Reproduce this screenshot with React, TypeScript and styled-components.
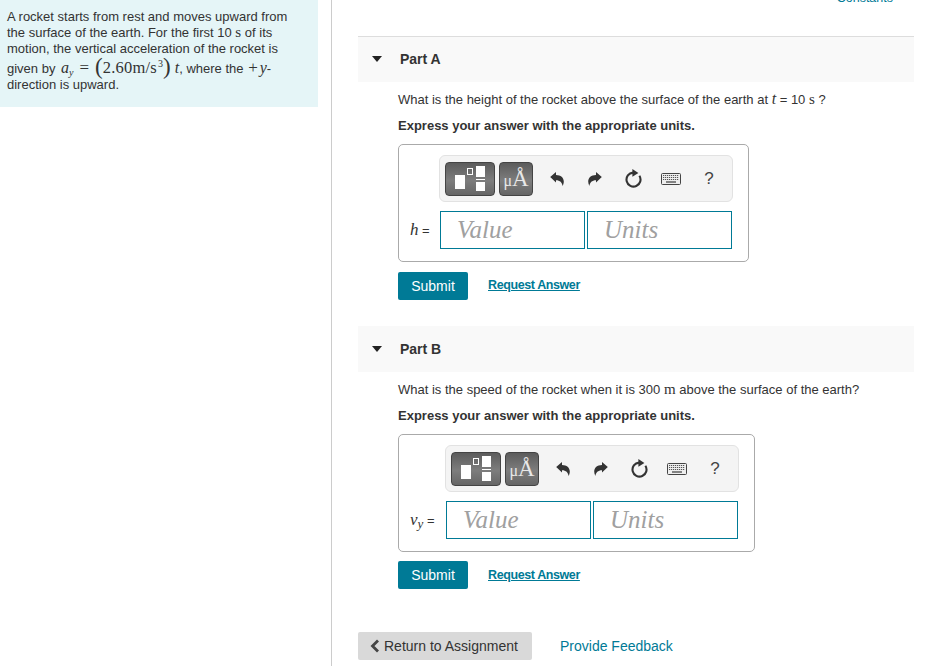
import React from "react";
import styled, { createGlobalStyle } from "styled-components";

const GlobalStyle = createGlobalStyle`
  html, body {
    margin: 0;
    padding: 0;
    background: #ffffff;
    height: 666px;
    overflow: hidden;
  }
  * {
    box-sizing: border-box;
  }
  body {
    font-family: "Liberation Sans", Arial, sans-serif;
    font-size: 13px;
    color: #333333;
  }
`;

const UndoIcon = () => (
  <svg width="14" height="14" viewBox="0 0 14 14">
    <path d="M0.2 5 L6 0 V3 C10.8 3 13.8 5.8 13.8 9.6 C13.8 11.2 13.3 12.7 12.6 14 C12.2 10.6 10 8.2 6 8.2 V10.4 Z" fill="#333333" />
  </svg>
);

const RedoIcon = () => (
  <svg width="14" height="14" viewBox="0 0 14 14">
    <path d="M13.8 5 L8 0 V3 C3.2 3 0.2 5.8 0.2 9.6 C0.2 11.2 0.7 12.7 1.4 14 C1.8 10.6 4 8.2 8 8.2 V10.4 Z" fill="#333333" />
  </svg>
);

const ResetIcon = () => (
  <svg width="17" height="19" viewBox="0 0 17 19">
    <path d="M8 3.6 A7 7 0 1 0 14.4 6.8" fill="none" stroke="#333333" strokeWidth="2.1" />
    <path d="M7.4 0 L13.4 4 L7.4 7.8 Z" fill="#333333" />
  </svg>
);

const KeyboardIcon = () => (
  <svg width="20" height="12" viewBox="0 0 20 12">
    <rect x="0.5" y="0.5" width="19" height="11" rx="1" fill="#eeeeee" stroke="#444444" />
    <path d="M2 2.5 H18 M2 4.5 H18 M2 6.5 H18" stroke="#555555" strokeDasharray="1.2 0.8" />
    <path d="M5 9 H15" stroke="#555555" strokeWidth="1.4" />
  </svg>
);

const TemplateIcon = () => (
  <svg width="30" height="25" viewBox="0 0 30 25">
    <rect x="0" y="9" width="10" height="14" fill="#ffffff" />
    <rect x="12.5" y="2.5" width="5" height="6" fill="none" stroke="#ffffff" />
    <rect x="21" y="0" width="9" height="11" fill="#ffffff" />
    <rect x="21" y="13" width="9" height="1" fill="#ffffff" />
    <rect x="21" y="16" width="9" height="9" fill="#ffffff" />
  </svg>
);

const Part = ({
  name,
  question,
  label,
  labelWidth,
  first,
}: {
  name: string;
  question: React.ReactNode;
  label: React.ReactNode;
  labelWidth: number;
  first?: boolean;
}) => (
  <section>
    <PartHeader $first={first}>
      <Caret />
      <PartTitle>{name}</PartTitle>
    </PartHeader>
    <PartBody>
      <Question>{question}</Question>
      <Instruction>Express your answer with the appropriate units.</Instruction>
      <AnswerBox $labelWidth={labelWidth}>
        <Toolbar>
          <DarkButton $width={50}>
            <TemplateIcon />
          </DarkButton>
          <DarkButton $width={34}>
            <UnitGlyph>
              <small>μ</small>Å
            </UnitGlyph>
          </DarkButton>
          <IconSlot $left={3}>
            <UndoIcon />
          </IconSlot>
          <IconSlot>
            <RedoIcon />
          </IconSlot>
          <IconSlot>
            <ResetIcon />
          </IconSlot>
          <IconSlot>
            <KeyboardIcon />
          </IconSlot>
          <IconSlot>
            <Help>?</Help>
          </IconSlot>
        </Toolbar>
        <FieldLabel>{label}</FieldLabel>
        <Fields>
          <Field placeholder="Value" readOnly />
          <Field placeholder="Units" readOnly />
        </Fields>
      </AnswerBox>
      <Actions $first={first}>
        <Submit>Submit</Submit>
        <RequestLink href="#" $first={first}>
          Request Answer
        </RequestLink>
      </Actions>
    </PartBody>
  </section>
);

const App = () => {
  return (
    <Page>
      <GlobalStyle />
      <Intro>
        <div>A rocket starts from rest and moves upward from</div>
        <div>
          the surface of the earth. For the first 10 <TexRoman>s</TexRoman> of its
        </div>
        <div>motion, the vertical acceleration of the rocket is</div>
        <GivenLine>
          given by{" "}
          <IntroVar $left={2}>
            a<sub>y</sub>
          </IntroVar>
          <TexOp $side={6}>=</TexOp>
          <TexParen>(</TexParen>
          <TexNum>
            2.60m/s<sup>3</sup>
          </TexNum>
          <TexParen>)</TexParen>
          <IntroVar $left={4}>t</IntroVar>, where the <TexOp $side={1}>+</TexOp>
          <IntroVar $left={1}>y</IntroVar>-
        </GivenLine>
        <div>direction is upward.</div>
      </Intro>
      <Main>
        <TopLinks>
          <ConstantsLink href="#">Constants</ConstantsLink>
        </TopLinks>
        <Part
          first
          name="Part A"
          labelWidth={21}
          label={
            <>
              <TexVar>h</TexVar> =
            </>
          }
          question={
            <>
              What is the height of the rocket above the surface of the earth at <TexVar>t</TexVar> = 10{" "}
              <TexRoman>s</TexRoman> ?
            </>
          }
        />
        <Part
          name="Part B"
          labelWidth={27}
          label={
            <>
              <TexVar>
                v<sub>y</sub>
              </TexVar>{" "}
              =
            </>
          }
          question={
            <>
              What is the speed of the rocket when it is 300 <TexRoman>m</TexRoman> above the surface of the earth?
            </>
          }
        />
        <Footer>
          <ReturnButton>
            <svg width="10" height="14" viewBox="0 0 10 14">
              <path d="M8 1.5 L2.5 7 L8 12.5" fill="none" stroke="#444444" strokeWidth="2.8" />
            </svg>
            Return to Assignment
          </ReturnButton>
          <FeedbackLink href="#">Provide Feedback</FeedbackLink>
        </Footer>
      </Main>
    </Page>
  );
};

export default App;

const Page = styled.div`
  display: flex;
  align-items: flex-start;
  width: 929px;
  height: 666px;
  overflow: hidden;
`;

const Intro = styled.div`
  width: 318px;
  height: 107px;
  flex-shrink: 0;
  padding: 9px 7px 0;
  background-color: #e5f5f7;
  font-size: 13px;
  line-height: 16px;
  color: #333333;
  white-space: nowrap;
`;

const GivenLine = styled.div`
  height: 20px;
  line-height: 22px;
`;

const TexNum = styled.span`
  font-family: "Liberation Serif", serif;
  font-size: 16.5px;
  letter-spacing: 0.2px;
  sup {
    font-size: 10px;
    line-height: 0;
    margin-left: 1px;
  }
`;

const TexOp = styled.span<{ $side: number }>`
  margin: 0 ${(p) => p.$side}px;
  font-family: "Liberation Serif", serif;
  font-size: 17px;
`;

const TexParen = styled.span`
  font-family: "Liberation Serif", serif;
  font-size: 23px;
  line-height: 0;
  font-weight: 300;
  vertical-align: -1px;
`;

const TexVar = styled.i`
  font-family: "Liberation Serif", serif;
  font-size: 16px;
  line-height: 0;
  sub {
    font-size: 10px;
    line-height: 0;
    vertical-align: -3px;
  }
`;

const IntroVar = styled(TexVar)<{ $left: number }>`
  margin-left: ${(p) => p.$left}px;
`;

const TexRoman = styled.span`
  font-family: "Liberation Serif", serif;
  font-size: 15px;
  line-height: 0;
`;

const Main = styled.main`
  width: 598px;
  height: 666px;
  margin-left: 13px;
  padding: 0 15px 0 26px;
  border-left: 1px solid #cccccc;
`;

const TopLinks = styled.div`
  display: flex;
  justify-content: flex-end;
  height: 36px;
  padding-right: 21px;
  overflow: hidden;
`;

const ConstantsLink = styled.a`
  margin-top: -10px;
  height: 16px;
  font-size: 12.5px;
  line-height: 16px;
  color: #007a96;
  text-decoration: none;
`;

const PartHeader = styled.div<{ $first?: boolean }>`
  display: flex;
  align-items: center;
  height: 46px;
  padding-left: 14px;
  background-color: #f9f9f9;
  box-shadow: ${(p) => (p.$first ? "inset 0 1px #dddddd" : "none")};
`;

const Caret = styled.span`
  width: 0;
  height: 0;
  border-left: 5.5px solid transparent;
  border-right: 5.5px solid transparent;
  border-top: 6px solid #222222;
`;

const PartTitle = styled.h3`
  margin: 0 0 0 18px;
  font-size: 14px;
  font-weight: bold;
  color: #333333;
`;

const PartBody = styled.div`
  padding-left: 40px;
`;

const Question = styled.p`
  margin: 0;
  height: 32px;
  padding-top: 9px;
  line-height: 18px;
  font-size: 13px;
  color: #333333;
`;

const Instruction = styled.p`
  margin: 0;
  height: 30px;
  padding-top: 3px;
  line-height: 18px;
  font-size: 13px;
  font-weight: bold;
`;

const AnswerBox = styled.div<{ $labelWidth: number }>`
  display: inline-grid;
  grid-template-columns: ${(p) => p.$labelWidth}px 294px;
  column-gap: 8px;
  row-gap: 9px;
  align-items: center;
  padding: 10px 15px 12px 11px;
  border: 1px solid #aaaaaa;
  border-radius: 5px;
  vertical-align: top;
`;

const Toolbar = styled.div`
  grid-column: 2;
  display: flex;
  align-items: center;
  gap: 4px;
  height: 47px;
  padding: 0 5px;
  background-color: #f4f4f4;
  border: 1px solid #e2e2e2;
  border-radius: 6px;
`;

const DarkButton = styled.div<{ $width: number }>`
  display: flex;
  align-items: center;
  justify-content: center;
  width: ${(p) => p.$width}px;
  height: 34px;
  flex-shrink: 0;
  background: linear-gradient(#5c5c5c, #7d7d7d 55%, #666666);
  border: 1px solid #444444;
  border-radius: 4px;
`;

const UnitGlyph = styled.span`
  font-family: "Liberation Serif", serif;
  font-size: 23px;
  line-height: 1;
  color: #e8e8e8;
  small {
    font-size: 16px;
  }
`;

const IconSlot = styled.div<{ $left?: number }>`
  display: flex;
  align-items: center;
  justify-content: center;
  width: 34px;
  margin-left: ${(p) => p.$left ?? 0}px;
  flex-shrink: 0;
`;

const Help = styled.span`
  font-size: 17px;
  color: #444444;
`;

const FieldLabel = styled.div`
  grid-column: 1;
  white-space: nowrap;
  font-size: 13px;
  text-align: left;
  i {
    font-size: 17px;
  }
  sub {
    font-size: 13px;
  }
`;

const Fields = styled.div`
  display: flex;
  gap: 2px;
  margin-left: 1px;
`;

const Field = styled.input`
  width: 145px;
  height: 38px;
  padding: 0 0 0 16px;
  border: 1px solid #007a96;
  outline: none;
  background: #ffffff;
  font-family: "Liberation Serif", serif;
  font-style: italic;
  font-size: 25px;
  &::placeholder {
    color: #a0a0a0;
    opacity: 1;
  }
`;

const Actions = styled.div<{ $first?: boolean }>`
  display: flex;
  align-items: flex-start;
  gap: 20px;
  height: 54px;
  margin-top: ${(p) => (p.$first ? 10 : 9)}px;
`;

const Submit = styled.button`
  width: 70px;
  height: 28px;
  padding: 0;
  border: none;
  border-radius: 2px;
  background-color: #007a96;
  color: #ffffff;
  font-family: inherit;
  font-size: 14px;
  font-weight: normal;
`;

const RequestLink = styled.a<{ $first?: boolean }>`
  margin-top: ${(p) => (p.$first ? 5 : 6)}px;
  font-size: 12.5px;
  letter-spacing: -0.4px;
  font-weight: bold;
  line-height: 16px;
  color: #007a96;
  text-decoration: underline;
`;

const Footer = styled.footer`
  display: flex;
  align-items: center;
  gap: 28px;
  margin-top: 17px;
`;

const ReturnButton = styled.button`
  display: flex;
  align-items: center;
  gap: 4px;
  width: 174px;
  height: 28px;
  padding: 0 0 0 12px;
  border: none;
  border-radius: 2px;
  background-color: #d9d9d9;
  color: #333333;
  font-family: inherit;
  font-size: 14px;
`;

const FeedbackLink = styled.a`
  font-size: 14px;
  color: #007a96;
  text-decoration: none;
`;
